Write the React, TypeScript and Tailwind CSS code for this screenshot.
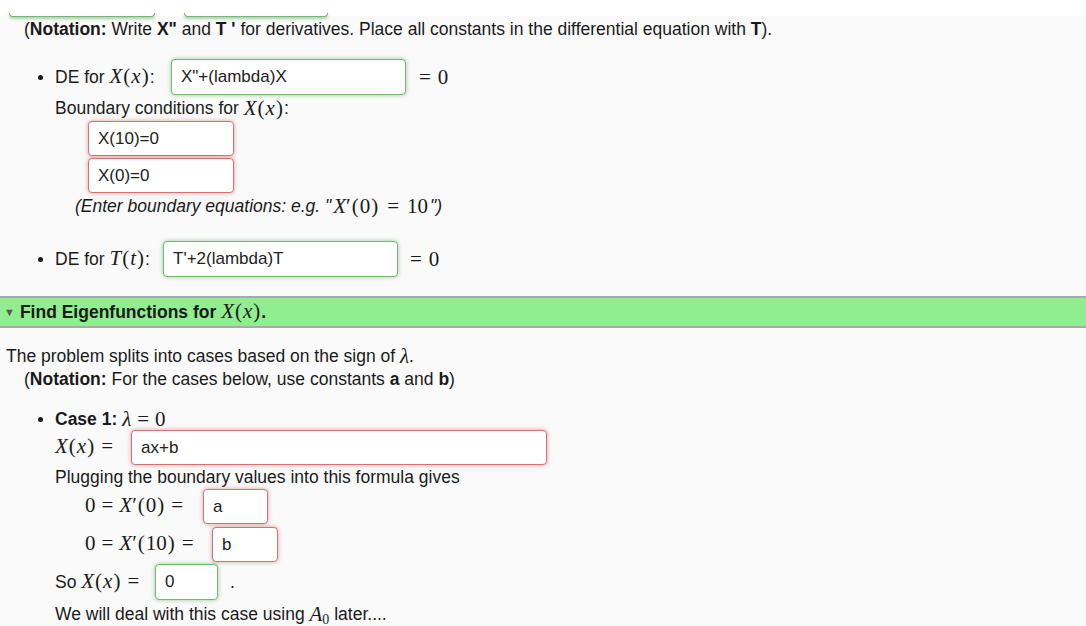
import React from "react";

const sans = { fontFamily: '"Liberation Sans", Arial, sans-serif' };

function M({ children, className = "" }: { children: React.ReactNode; className?: string }) {
  return (
    <span
      className={"text-[21px] not-italic leading-none whitespace-nowrap " + className}
      style={{ fontFamily: '"Liberation Serif", "Times New Roman", serif' }}
    >
      {children}
    </span>
  );
}

function I({ children }: { children: React.ReactNode }) {
  return <span className="italic">{children}</span>;
}

function Eq() {
  return <span className="mx-[6px]">=</span>;
}

function P({ children }: { children: React.ReactNode }) {
  return <span className="mx-[1px]">{children}</span>;
}

function Box({
  value,
  w,
  ok,
  h = "h-[35px]",
  className = "",
}: {
  value: string;
  w: string;
  ok: boolean;
  h?: string;
  className?: string;
}) {
  const tone = ok
    ? "border-[#72b872] shadow-[0_0_4px_rgba(81,153,81,0.55)]"
    : "border-[#d37474] shadow-[0_0_4px_rgba(191,84,84,0.55)]";
  return (
    <div
      className={`${w} ${h} ${tone} ${className} shrink-0 bg-white border rounded-[4px] pl-[9px] flex items-center text-[17px] text-[#222]`}
    >
      {value}
    </div>
  );
}

function Bullet() {
  return <span className="w-[5px] h-[5px] rounded-full bg-[#1a1a1a] shrink-0 ml-[38px] mr-[12px]" />;
}

export default function App() {
  return (
    <div className="w-[1086px] h-[626px] overflow-hidden bg-[#fafafa] text-[#1a1a1a] text-[17.5px]" style={sans}>
      {/* top strip */}
      <div className="h-[16px] bg-white flex items-end">
        <div className="flex mb-[-1px]">
          <div className="ml-[9px] w-[146px] h-[4px] bg-white border-x border-b border-[#72b872] rounded-b-[4px] shadow-[0_2px_3px_rgba(81,153,81,0.45)]" />
          <div className="ml-[29px] w-[144px] h-[4px] bg-white border-x border-b border-[#72b872] rounded-b-[4px] shadow-[0_2px_3px_rgba(81,153,81,0.45)]" />
        </div>
      </div>

      {/* notation */}
      <div className="h-[26px] pl-[24px] flex items-center whitespace-nowrap">
        (<b>Notation:</b>&nbsp;Write&nbsp;<b>X"</b>&nbsp;and&nbsp;<b>T '</b>&nbsp;for derivatives. Place all constants in the differential equation with&nbsp;<b>T</b>).
      </div>

      {/* DE for X */}
      <div className="mt-[17px] h-[36px] flex items-center">
        <Bullet />
        <span className="w-[116px] shrink-0 whitespace-nowrap">
          DE for{" "}
          <M>
            <I>X</I>
            <P>(</P>
            <I>x</I>
            <P>)</P>
          </M>
          :
        </span>
        <Box value={'X"+(lambda)X'} w="w-[235px]" h="h-[36px]" ok />
        <M className="ml-[13px]">
          =<span className="ml-[7px]">0</span>
        </M>
      </div>

      <div className="h-[26px] pl-[55px] flex items-center whitespace-nowrap">
        Boundary conditions for&nbsp;
        <M>
          <I>X</I>
          <P>(</P>
          <I>x</I>
          <P>)</P>
        </M>
        :
      </div>
      <div className="pl-[88px]">
        <Box value="X(10)=0" w="w-[146px]" ok={false} />
        <Box value="X(0)=0" w="w-[146px]" ok={false} className="mt-[2px]" />
      </div>
      <div className="h-[26px] pl-[75px] flex items-center italic whitespace-nowrap">
        (Enter boundary equations: e.g. "
        <M className="mx-[2px]">
          <I>X</I>′<P>(</P>0<P>)</P>
          <span className="mx-[8px]">=</span>
          10
        </M>
        ")
      </div>

      {/* DE for T */}
      <div className="mt-[22px] h-[36px] flex items-center">
        <Bullet />
        <span className="w-[108px] shrink-0 whitespace-nowrap">
          DE for{" "}
          <M>
            <I>T</I>
            <P>(</P>
            <I>t</I>
            <P>)</P>
          </M>
          :
        </span>
        <Box value="T'+2(lambda)T" w="w-[235px]" h="h-[36px]" ok />
        <M className="ml-[12px]">
          =<span className="ml-[7px]">0</span>
        </M>
      </div>

      {/* header */}
      <div className="mt-[19px] h-[32px] bg-[#90ee90] border-y-2 border-[#aaaaaa] flex items-center">
        <span className="ml-[4px] mr-[5px] text-[11px] text-[#555] leading-none">▼</span>
        <b className="whitespace-nowrap">
          Find Eigenfunctions for{" "}
          <M className="font-normal">
            <I>X</I>
            <P>(</P>
            <I>x</I>
            <P>)</P>
          </M>
          .
        </b>
      </div>

      <div className="mt-[17px] h-[23px] pl-[6px] flex items-center whitespace-nowrap">
        The problem splits into cases based on the sign of&nbsp;
        <M>
          <I>λ</I>
        </M>
        .
      </div>
      <div className="h-[22px] pl-[24px] flex items-center whitespace-nowrap">
        (<b>Notation:</b>&nbsp;For the cases below, use constants&nbsp;<b>a</b>&nbsp;and&nbsp;<b>b</b>)
      </div>

      {/* Case 1 */}
      <div className="mt-[18px] h-[22px] flex items-center">
        <Bullet />
        <b>Case 1:</b>&nbsp;
        <M>
          <I>λ</I>
          <Eq />0
        </M>
      </div>
      <div className="h-[35px] pl-[55px] flex items-center">
        <span className="w-[76px] shrink-0">
          <M>
            <I>X</I>
            <P>(</P>
            <I>x</I>
            <P>)</P>
            <Eq />
          </M>
        </span>
        <Box value="ax+b" w="w-[416px]" ok={false} />
      </div>
      <div className="h-[24px] pl-[55px] flex items-center whitespace-nowrap">
        Plugging the boundary values into this formula gives
      </div>
      <div className="h-[35px] pl-[85px] flex items-center">
        <span className="w-[118px] shrink-0">
          <M>
            0<Eq />
            <I>X</I>′<P>(</P>0<P>)</P>
            <Eq />
          </M>
        </span>
        <Box value="a" w="w-[65px]" ok={false} />
      </div>
      <div className="mt-[3px] h-[35px] pl-[85px] flex items-center">
        <span className="w-[127px] shrink-0">
          <M>
            0<Eq />
            <I>X</I>′<P>(</P>10<P>)</P>
            <Eq />
          </M>
        </span>
        <Box value="b" w="w-[66px]" ok={false} />
      </div>
      <div className="mt-[2px] h-[36px] pl-[55px] flex items-center">
        <span className="w-[100px] shrink-0 whitespace-nowrap">
          So{" "}
          <M>
            <I>X</I>
            <P>(</P>
            <I>x</I>
            <P>)</P>
            <Eq />
          </M>
        </span>
        <Box value="0" w="w-[63px]" h="h-[36px]" ok />
        <span className="ml-[12px]">.</span>
      </div>
      <div className="mt-[2px] h-[24px] pl-[55px] flex items-center whitespace-nowrap">
        We will deal with this case using&nbsp;
        <M>
          <I>A</I>
          <sub className="text-[14px] not-italic">0</sub>
        </M>
        &nbsp;later....
      </div>
    </div>
  );
}
